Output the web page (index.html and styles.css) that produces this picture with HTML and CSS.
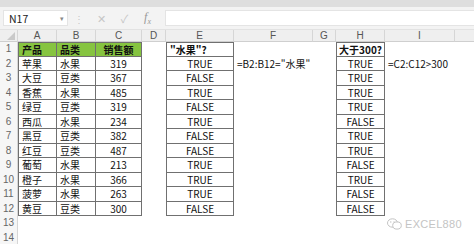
FILE: index.html
```html
<!DOCTYPE html>
<html lang="zh">
<head>
  <meta charset="UTF-8" />
  <title>EXCEL880</title>
  <link rel="stylesheet" href="styles.css">
</head>
<body>
  <div class="topband"></div>
  <div class="fbar">
    <div class="namebox">N17<span class="dd">▾</span></div>
    <div class="dots">⋮</div>
    <div class="ficon x">✕</div>
    <div class="ficon ok">✓</div>
    <div class="ficon fx">f<sub>x</sub></div>
    <div class="finput"></div>
  </div>

  <div class="sheet">
    <!-- column headers -->
    <div class="ch corner"><span class="tri"></span></div>
    <div class="ch">A</div><div class="ch">B</div><div class="ch">C</div><div class="ch">D</div>
    <div class="ch">E</div><div class="ch">F</div><div class="ch">G</div><div class="ch">H</div>
    <div class="ch">I</div><div class="ch last"></div>

    <!-- row 1 -->
    <div class="rh">1</div>
    <div class="c g bt bl bold">产品</div><div class="c g bt bold">品类</div><div class="c g bt bold mid">销售额</div>
    <div class="c"></div>
    <div class="c bt bl bold">"水果"?</div>
    <div class="c"></div><div class="c"></div>
    <div class="c bt bl bold mid">大于300?</div>
    <div class="c"></div><div class="c"></div>

    <div class="rh">2</div>
    <div class="c b bl">苹果</div><div class="c b">水果</div><div class="c b mid">319</div><div class="c"></div>
    <div class="c b bl mid">TRUE</div><div class="c">=B2:B12="水果"</div><div class="c"></div>
    <div class="c b bl mid">TRUE</div><div class="c">=C2:C12&gt;300</div><div class="c"></div>

    <div class="rh">3</div>
    <div class="c b bl">大豆</div><div class="c b">豆类</div><div class="c b mid">367</div><div class="c"></div>
    <div class="c b bl mid">FALSE</div><div class="c"></div><div class="c"></div>
    <div class="c b bl mid">TRUE</div><div class="c"></div><div class="c"></div>

    <div class="rh">4</div>
    <div class="c b bl">香蕉</div><div class="c b">水果</div><div class="c b mid">485</div><div class="c"></div>
    <div class="c b bl mid">TRUE</div><div class="c"></div><div class="c"></div>
    <div class="c b bl mid">TRUE</div><div class="c"></div><div class="c"></div>

    <div class="rh">5</div>
    <div class="c b bl">绿豆</div><div class="c b">豆类</div><div class="c b mid">319</div><div class="c"></div>
    <div class="c b bl mid">FALSE</div><div class="c"></div><div class="c"></div>
    <div class="c b bl mid">TRUE</div><div class="c"></div><div class="c"></div>

    <div class="rh">6</div>
    <div class="c b bl">西瓜</div><div class="c b">水果</div><div class="c b mid">234</div><div class="c"></div>
    <div class="c b bl mid">TRUE</div><div class="c"></div><div class="c"></div>
    <div class="c b bl mid">FALSE</div><div class="c"></div><div class="c"></div>

    <div class="rh">7</div>
    <div class="c b bl">黑豆</div><div class="c b">豆类</div><div class="c b mid">382</div><div class="c"></div>
    <div class="c b bl mid">FALSE</div><div class="c"></div><div class="c"></div>
    <div class="c b bl mid">TRUE</div><div class="c"></div><div class="c"></div>

    <div class="rh">8</div>
    <div class="c b bl">红豆</div><div class="c b">豆类</div><div class="c b mid">487</div><div class="c"></div>
    <div class="c b bl mid">FALSE</div><div class="c"></div><div class="c"></div>
    <div class="c b bl mid">TRUE</div><div class="c"></div><div class="c"></div>

    <div class="rh">9</div>
    <div class="c b bl">葡萄</div><div class="c b">水果</div><div class="c b mid">213</div><div class="c"></div>
    <div class="c b bl mid">TRUE</div><div class="c"></div><div class="c"></div>
    <div class="c b bl mid">FALSE</div><div class="c"></div><div class="c"></div>

    <div class="rh">10</div>
    <div class="c b bl">橙子</div><div class="c b">水果</div><div class="c b mid">366</div><div class="c"></div>
    <div class="c b bl mid">TRUE</div><div class="c"></div><div class="c"></div>
    <div class="c b bl mid">TRUE</div><div class="c"></div><div class="c"></div>

    <div class="rh">11</div>
    <div class="c b bl">菠萝</div><div class="c b">水果</div><div class="c b mid">263</div><div class="c"></div>
    <div class="c b bl mid">TRUE</div><div class="c"></div><div class="c"></div>
    <div class="c b bl mid">FALSE</div><div class="c"></div><div class="c"></div>

    <div class="rh">12</div>
    <div class="c b bl">黄豆</div><div class="c b">豆类</div><div class="c b mid">300</div><div class="c"></div>
    <div class="c b bl mid">FALSE</div><div class="c"></div><div class="c"></div>
    <div class="c b bl mid">FALSE</div><div class="c"></div><div class="c"></div>

    <div class="rh">13</div>
    <div class="c"></div><div class="c"></div><div class="c"></div><div class="c"></div><div class="c"></div>
    <div class="c"></div><div class="c"></div><div class="c"></div><div class="c"></div><div class="c"></div>

    <div class="rh">14</div>
    <div class="c"></div><div class="c"></div><div class="c"></div><div class="c"></div><div class="c"></div>
    <div class="c"></div><div class="c"></div><div class="c"></div><div class="c"></div><div class="c"></div>

    <div class="mark">
      <svg width="15" height="12" viewBox="0 0 15 12">
        <ellipse cx="5.5" cy="5" rx="5" ry="4.2" fill="none" stroke="#c4c4c4" stroke-width="1"/>
        <ellipse cx="10" cy="7.5" rx="4.3" ry="3.6" fill="#fff" stroke="#c4c4c4" stroke-width="1"/>
        <circle cx="3.8" cy="4" r="0.7" fill="#c4c4c4"/>
        <circle cx="7" cy="4" r="0.7" fill="#c4c4c4"/>
      </svg>
      <span>EXCEL880</span>
    </div>
  </div>
</body>
</html>
```

FILE: styles.css
```css
body { margin: 0; width: 474px; height: 244px; overflow: hidden; background: #fff; font-family: "Noto Sans CJK SC", "Liberation Sans", sans-serif; font-size: 10px; color: #111; }

.topband { height: 7px; background: #dedede; }

.fbar { height: 23px; background: #f3f3f3; display: flex; align-items: center; border-bottom: 1px solid #e2e2e2; box-sizing: border-box; }
.namebox { margin-left: 3px; width: 65px; height: 16px; background: #fff; border: 1px solid #e4e4e4; box-sizing: border-box; display: flex; align-items: center; justify-content: space-between; padding: 0 3px 0 5px; font-size: 10.5px; color: #222; }
.dd { font-size: 7px; color: #888; }
.dots { width: 22px; text-align: center; color: #c8c8c8; font-size: 10px; }
.ficon { width: 23px; text-align: center; color: #c6c6c6; font-size: 11px; }
.ficon.fx { font-family: "Liberation Serif", serif; font-style: italic; color: #999; font-size: 12px; }
.ficon.fx sub { font-size: 8px; }
.finput { flex: 1; margin-left: 6px; height: 16px; background: #fff; border: 1px solid #e4e4e4; border-right: 0; box-sizing: border-box; }

.sheet { position: relative; display: grid; grid-template-columns: 18px 39px 39px 46px 24px 68px 79px 23px 49px 70px 1fr; grid-template-rows: 12px repeat(14, 14.5px); }

.ch { background: #efefef; border-right: 1px solid #d6d6d6; border-bottom: 1px solid #cfcfcf; box-sizing: border-box; text-align: center; font-family: "Liberation Sans", sans-serif; font-size: 10px; line-height: 11px; color: #555; }
.ch.last { border-right: 0; }
.corner { position: relative; }
.tri { position: absolute; right: 2px; bottom: 1px; width: 0; height: 0; border-left: 8px solid transparent; border-bottom: 8px solid #c9c9c9; }

.rh { background: #f6f6f6; text-align: center; font-family: "Liberation Sans", sans-serif; font-size: 10px; line-height: 14.5px; color: #666; border-right: 1px solid #d6d6d6; box-sizing: border-box; }

.c { box-sizing: border-box; line-height: 13px; padding-left: 3px; white-space: nowrap; font-size: 10px; }
.b { border-right: 1px solid #707070; border-bottom: 1px solid #707070; }
.bt { border-top: 1px solid #707070; border-right: 1px solid #707070; border-bottom: 1px solid #707070; }
.bl { border-left: 1px solid #707070; }
.g { background: #86c440; }
.bold { font-weight: bold; }
.mid { text-align: center; padding-left: 0; }

.mark { position: absolute; left: 387px; top: 188px; display: flex; align-items: center; gap: 3px; color: #c4c4c4; font-family: "Liberation Sans", sans-serif; font-size: 11px; letter-spacing: 0.3px; }
```
